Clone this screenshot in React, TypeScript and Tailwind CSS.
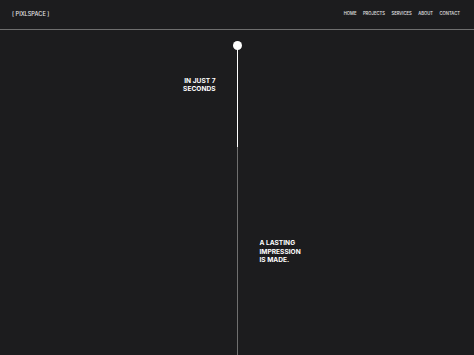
const navItems = ["HOME", "PROJECTS", "SERVICES", "ABOUT", "CONTACT"];

export default function App() {
  return (
    <div className="w-full h-[355px] bg-[#1c1c1e] text-white font-['Inter',sans-serif] overflow-hidden flex flex-col">
      {/* Header */}
      <header className="h-[30px] shrink-0 flex items-center justify-between pl-[12px] pr-[14px] border-b border-[#6e6e6e]">
        <span className="text-[5.6px] font-medium text-[#e6e6e6]">[ PIXLSPACE ]</span>
        <nav className="flex items-center gap-[6.5px]">
          {navItems.map((item) => (
            <span key={item} className="text-[4.2px] font-medium text-[#e6e6e6]">
              {item}
            </span>
          ))}
        </nav>
      </header>

      {/* Timeline */}
      <main className="flex-1 grid grid-cols-[1fr_auto_1fr]">
        <div className="flex justify-end pr-[17px] pt-[47px]">
          <p className="text-[6.6px] font-bold leading-[8.3px] text-right">
            IN JUST 7
            <br />
            SECONDS
          </p>
        </div>

        <div className="flex flex-col items-center pt-[11px]">
          <div className="w-[9px] h-[9px] rounded-full bg-white shrink-0" />
          <div className="w-px h-[98px] bg-white -mt-[1px]" />
          <div className="w-px flex-1 bg-[#6f6f6f]" />
        </div>

        <div className="pl-[18px] pt-[209px]">
          <p className="text-[6.6px] font-bold leading-[8.5px]">
            A LASTING
            <br />
            IMPRESSION
            <br />
            IS MADE.
          </p>
        </div>
      </main>
    </div>
  );
}
